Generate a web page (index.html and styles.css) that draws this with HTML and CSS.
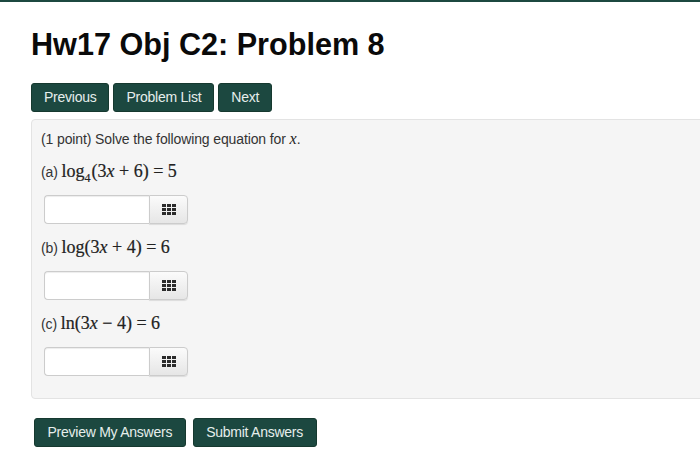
FILE: index.html
```html
<!DOCTYPE html>
<html lang="en">
<head>
  <meta charset="UTF-8">
  <meta name="viewport" content="width=device-width, initial-scale=1.0">
  <title>Hw17 Obj C2: Problem 8</title>
  <link rel="stylesheet" href="styles.css">
</head>
<body>
  <div class="container">
    <h1>Hw17 Obj C2: Problem 8</h1>

    <!-- Problem navigation -->
    <div class="nav-buttons">
      <a class="btn btn-previous">Previous</a>
      <a class="btn btn-list">Problem List</a>
      <a class="btn btn-next">Next</a>
    </div>

    <!-- Problem -->
    <form class="problem">
      <p class="intro">(1 point) Solve the following equation for <span class="math"><i>x</i></span>.</p>

      <p class="part">(a) <span class="math">log<sub>4</sub>(3<i>x</i> + 6) = 5</span></p>
      <div class="answer">
        <input type="text">
        <button type="button" class="palette">
          <svg width="14" height="11" viewBox="0 0 14 11"><path d="M0 0h4v3H0zM5 0h4v3H5zM10 0h4v3h-4zM0 4h4v3H0zM5 4h4v3H5zM10 4h4v3h-4zM0 8h4v3H0zM5 8h4v3H5zM10 8h4v3h-4z"/></svg>
        </button>
      </div>

      <p class="part">(b) <span class="math">log(3<i>x</i> + 4) = 6</span></p>
      <div class="answer">
        <input type="text">
        <button type="button" class="palette">
          <svg width="14" height="11" viewBox="0 0 14 11"><path d="M0 0h4v3H0zM5 0h4v3H5zM10 0h4v3h-4zM0 4h4v3H0zM5 4h4v3H5zM10 4h4v3h-4zM0 8h4v3H0zM5 8h4v3H5zM10 8h4v3h-4z"/></svg>
        </button>
      </div>

      <p class="part">(c) <span class="math">ln(3<i>x</i> − 4) = 6</span></p>
      <div class="answer">
        <input type="text">
        <button type="button" class="palette">
          <svg width="14" height="11" viewBox="0 0 14 11"><path d="M0 0h4v3H0zM5 0h4v3H5zM10 0h4v3h-4zM0 4h4v3H0zM5 4h4v3H5zM10 4h4v3h-4zM0 8h4v3H0zM5 8h4v3H5zM10 8h4v3h-4z"/></svg>
        </button>
      </div>
    </form>

    <!-- Submit -->
    <div class="submit-buttons">
      <a class="btn btn-preview">Preview My Answers</a>
      <a class="btn btn-submit">Submit Answers</a>
    </div>
  </div>
</body>
</html>
```

FILE: styles.css
```css
html, body {
  margin: 0;
  height: 100%;
  overflow: hidden;
}

body {
  font-family: "Liberation Sans", Arial, sans-serif;
  font-size: 14px;
  letter-spacing: -0.12px;
  color: #333;
  background-color: #fff;
  border-top: 2px solid #1c4840;
  box-sizing: border-box;
}

.container {
  padding-left: 31px;
}

h1 {
  margin: 0;
  padding-top: 24px;
  font-size: 30.6px;
  line-height: 36px;
  font-weight: bold;
  letter-spacing: 0;
  color: #0a0a0a;
}

.nav-buttons {
  display: flex;
  gap: 4px;
  margin-top: 21px;
}

.btn {
  display: block;
  box-sizing: border-box;
  height: 29px;
  line-height: 27px;
  padding: 0 12px;
  font-size: 14px;
  letter-spacing: -0.25px;
  color: #e6eeec;
  background-color: #1c4840;
  border: 1px solid #16392f;
  border-radius: 3px;
  cursor: pointer;
}

.problem {
  box-sizing: border-box;
  width: 700px;
  height: 280px;
  margin-top: 7px;
  padding: 9px 9px 0;
  background-color: #f5f5f5;
  border: 1px solid #e3e3e3;
  border-radius: 4px;
}

.intro {
  margin: 0;
  line-height: 20px;
}

.part {
  margin: 0;
  height: 26px;
  line-height: 24px;
}

.intro + .part {
  margin-top: 10px;
}

.math {
  font-family: "Liberation Serif", "Times New Roman", serif;
  font-size: 18px;
  letter-spacing: 0;
  color: #222;
  -webkit-text-stroke: 0.2px #222;
}

.intro .math {
  font-size: 16px;
  -webkit-text-stroke: 0;
}

.math sub {
  font-size: 12px;
  line-height: 0;
  margin-right: 1px;
}

.answer {
  display: flex;
  width: 144px;
  height: 29px;
  margin: 10px 0 11px 3px;
}

.answer input {
  box-sizing: border-box;
  width: 105px;
  height: 29px;
  padding: 4px 6px;
  background-color: #fff;
  border: 1px solid #ccc;
  border-right: 0;
  border-radius: 4px 0 0 4px;
  box-shadow: inset 0 1px 1px rgba(0, 0, 0, 0.075);
}

.palette {
  box-sizing: border-box;
  display: flex;
  align-items: center;
  justify-content: center;
  width: 39px;
  height: 29px;
  padding: 0;
  background: linear-gradient(#fbfbfb, #e6e6e6);
  border: 1px solid #ccc;
  border-radius: 0 4px 4px 0;
  box-shadow: 0 1px 1px rgba(0, 0, 0, 0.1);
}

.palette svg {
  fill: #2b2b2b;
}

.submit-buttons {
  display: flex;
  gap: 7px;
  margin: 19px 0 0 3px;
}

.submit-buttons .btn {
  padding: 0 12.5px;
}
```
